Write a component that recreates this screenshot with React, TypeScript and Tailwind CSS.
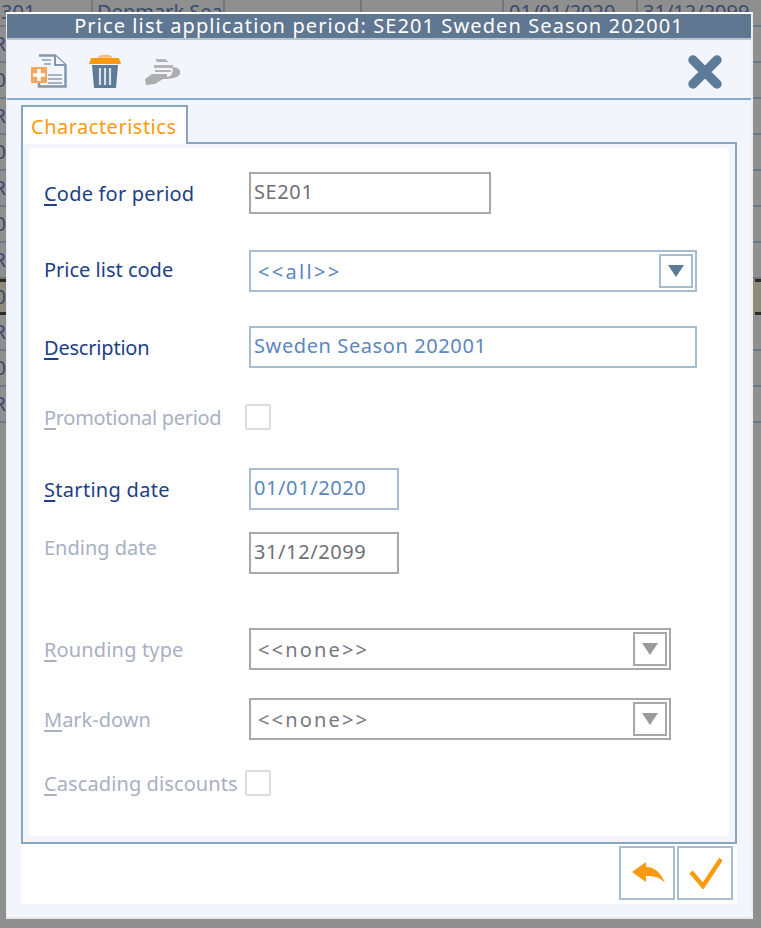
const font = "font-['Noto_Sans',_Tahoma,_sans-serif]"

function Label({ first, rest, muted, track }: { first?: string; rest: string; muted?: boolean; track?: string }) {
    return (
        <span className={`block pt-[2px] text-[20px] leading-[28px] whitespace-nowrap ${track ?? ""} ${muted ? "text-[#a9afc4]" : "text-[#1c3f86]"}`}>
            {first && <span className="underline decoration-2 underline-offset-[3px]">{first}</span>}
            {rest}
        </span>
    )
}

function Caret({ muted }: { muted?: boolean }) {
    return (
        <svg width="20" height="16" viewBox="0 0 20 16">
            <path d="M2 2H18L10 14Z" fill={muted ? "#9a9a9a" : "#5d7a98"} />
        </svg>
    )
}

function Select({ value, width, muted, track }: { value: string; width: string; muted?: boolean; track: string }) {
    return (
        <div className={`flex items-center justify-between h-[42px] border-2 pl-[7px] pr-[2px] ${width} ${muted ? "border-[#a8a8a8] text-[#77777f]" : "border-[#a8bcd0] text-[#5b86c0]"}`}>
            <span className={`text-[20px] pt-[2px] ${track}`}>{value}</span>
            <div className={`flex items-center justify-center w-[34px] h-[34px] border-2 ${muted ? "border-[#a8a8a8]" : "border-[#a8bcd0]"}`}>
                <Caret muted={muted} />
            </div>
        </div>
    )
}

function Field({ value, width, blue }: { value: string; width: string; blue?: boolean }) {
    return (
        <div className={`flex items-center h-[42px] border-2 pl-[3px] pb-[2px] text-[20px] tracking-[0.6px] ${width} ${blue ? "border-[#a8bcd0] text-[#5b86c0]" : "border-[#a8a8a8] text-[#6f6f77]"}`}>
            {value}
        </div>
    )
}

function Check() {
    return <div className="w-[26px] h-[26px] -ml-[4px] border-2 border-[#dcdcdc] rounded-[2px] bg-white" />
}

function Row({ label, className, children }: { label: React.ReactNode; className: string; children: React.ReactNode }) {
    return (
        <div className={`flex items-center h-[42px] ${className}`}>
            <div className="w-[205px]">{label}</div>
            {children}
        </div>
    )
}

function BgRow({ left, hl }: { left: string; hl?: boolean }) {
    return (
        <div className={`flex justify-between items-center h-[36px] ${hl ? "bg-[#8e8a7c] border-y-[3px] border-dashed border-[#2e2a28]" : "border-b-2 border-[#6f7780]"}`}>
            <span className="w-[6px] overflow-hidden text-[20px] text-[#3c4a6c] flex justify-end">{left}</span>
        </div>
    )
}

export default function App() {
    const rows = ["R", "0", "R", "0", "R", "0", "R", "0", "R", "0", "R"]
    return (
        <div className={`relative w-[761px] h-[928px] overflow-hidden bg-[#8f8f8f] ${font}`}>
            {/* table behind the dialog */}
            <div className="flex h-[27px] border-b-2 border-[#6f7780] text-[20px] text-[#3c4a6c] leading-[24px]">
                <div className="w-[93px] border-r-2 border-[#6f7780] pl-[1px]">301</div>
                <div className="w-[132px] border-r-2 border-[#6f7780] pl-[4px] overflow-hidden whitespace-nowrap">Denmark Sea</div>
                <div className="w-[137px] border-r-2 border-[#6f7780]" />
                <div className="w-[142px] border-r-2 border-[#6f7780]" />
                <div className="w-[134px] border-r-2 border-[#6f7780] pl-[5px]">01/01/2020</div>
                <div className="flex-1 pl-[5px] whitespace-nowrap">31/12/2099</div>
            </div>
            {rows.map((r, i) => <BgRow key={i} left={r} hl={i === 7} />)}

            {/* dialog */}
            <div className="absolute left-[6px] top-[12px] w-[747px] h-[907px] flex flex-col bg-[#f2f6fc] border-t-2 border-l-[1px] border-r-2 border-b-2 border-t-white border-l-[#e6e9ee] border-r-[#eceff3] border-b-[#e6e6e6]">
                <div className="h-[24px] shrink-0 bg-[#5f7791] text-white text-[20px] leading-[24px] text-center tracking-[1.1px] whitespace-nowrap">
                    Price list application period: SE201 Sweden Season 202001
                </div>
                <div className="h-[2px] shrink-0 bg-[#b8c4d0]" />
                <div className="h-[44px] shrink-0 flex items-start justify-between pt-[14px] pl-[24px] pr-[28px] border-b-2 border-[#83acd4] box-content">
                    <div className="flex items-start gap-[22px] blur-[0.4px]">
                        <svg width="36" height="34" viewBox="0 0 36 34">
                            <path d="M8 1.5H24L34.5 11V32.5H8V28" fill="none" stroke="#8597ad" strokeWidth="2.5" />
                            <path d="M24 1.5V11H34.5" fill="#f2f6fc" stroke="#8597ad" strokeWidth="2" />
                            <path d="M11 6H20M13 10H20M17 21H31M17 25H31M17 29H31" stroke="#a5b2c2" strokeWidth="2" />
                            <rect x="0" y="13" width="16" height="16" fill="#f9a55a" />
                            <path d="M8 15V27M2 21H14" stroke="#fff" strokeWidth="3.5" />
                        </svg>
                        <svg width="32" height="36" viewBox="0 0 32 36">
                            <path d="M10 4C10 1 22 1 22 4" fill="#fbd3aa" stroke="#f9b777" strokeWidth="2" />
                            <path d="M2 4H30L32 10H0Z" fill="#fb9a0e" />
                            <path d="M3 11H29L27 34H5Z" fill="#5d7a98" />
                            <path d="M11 14V31M16 14V31M21 14V31" stroke="#d8e0ea" strokeWidth="2.2" />
                        </svg>
                        <svg width="36" height="28" viewBox="0 0 36 28" className="ml-[2px] mt-[4px] blur-[0.6px]">
                            <path d="M10 1H20L24 4H12ZM9 7H28V10H9ZM10 12H26V14H10Z" fill="#b4b4b4" />
                            <path d="M27 9C33 9 36 12 35 16C33 20 26 21 18 21L10 26L1 27L0 21L7 16H22V19C27 18 29 14 27 9Z" fill="#adadad" />
                        </svg>
                    </div>
                    <svg width="36" height="36" viewBox="0 0 36 36" className="blur-[0.4px]">
                        <path d="M6 6L30 30M30 6L6 30" stroke="#5d7a98" strokeWidth="9.5" strokeLinecap="round" />
                    </svg>
                </div>

                <div className="pl-[14px] pt-[5px] shrink-0">
                    <div className="w-[167px] h-[39px] -mb-[2px] relative border-2 border-b-0 border-[#8aa5c0] bg-white pl-[8px] text-[20px] leading-[40px] tracking-[0.5px] text-[#fb9a0e]">
                        Characteristics
                    </div>
                    <div className="w-[716px] h-[702px] border-2 border-[#8aa5c0] pt-[4px] pb-[6px] px-[6px]">
                        <div className="h-full bg-white pl-[15px] pt-[24px]">
                            <Row label={<Label first="C" rest="ode for period" track="tracking-[0.2px]" />} className=""><Field value="SE201" width="w-[242px]" /></Row>
                            <Row label={<div className="-mt-[4px]"><Label rest="Price list code" /></div>} className="mt-[36px]"><Select value="<<all>>" width="w-[448px]" track="tracking-[2.3px]" /></Row>
                            <Row label={<Label first="D" rest="escription" track="tracking-[-0.2px]" />} className="mt-[34px]"><Field value="Sweden Season 202001" width="w-[448px]" blue /></Row>
                            <Row label={<Label first="P" rest="romotional period" muted track="tracking-[-0.3px]" />} className="mt-[28px]"><Check /></Row>
                            <Row label={<Label first="S" rest="tarting date" track="tracking-[0.3px]" />} className="mt-[30px]"><Field value="01/01/2020" width="w-[150px]" blue /></Row>
                            <Row label={<div className="-mt-[12px]"><Label rest="Ending date" muted /></div>} className="mt-[22px]"><Field value="31/12/2099" width="w-[150px]" /></Row>
                            <Row label={<Label first="R" rest="ounding type" muted track="tracking-[0.15px]" />} className="mt-[54px]"><Select value="<<none>>" width="w-[422px]" muted track="tracking-[2.15px]" /></Row>
                            <Row label={<Label first="M" rest="ark-down" muted />} className="mt-[28px]"><Select value="<<none>>" width="w-[422px]" muted track="tracking-[2.15px]" /></Row>
                            <Row label={<Label first="C" rest="ascading discounts" muted track="tracking-[0.1px]" />} className="mt-[22px]"><Check /></Row>
                        </div>
                    </div>
                    <div className="w-[716px] h-[60px] bg-white flex justify-end items-start gap-[2px] pt-[2px] pr-[4px]">
                        <div className="w-[56px] h-[54px] border-2 border-[#a8bcd0] flex items-center justify-center">
                            <svg width="36" height="26" viewBox="0 0 36 26">
                                <path d="M3 12L17 2V7C26 7 32 13 36 23C31 17 25 16 17 16V22Z" fill="#fb9a0e" />
                            </svg>
                        </div>
                        <div className="w-[56px] h-[54px] border-2 border-[#a8bcd0] flex items-center justify-center">
                            <svg width="34" height="32" viewBox="0 0 34 32">
                                <path d="M3 15L15 29L33 2" fill="none" stroke="#fb9a0e" strokeWidth="4.5" />
                            </svg>
                        </div>
                    </div>
                </div>
            </div>
        </div>
    )
}
